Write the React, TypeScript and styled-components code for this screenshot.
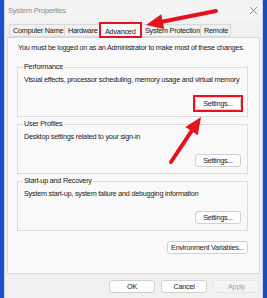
import React from "react";
import styled, { createGlobalStyle, css } from "styled-components";

const Global = createGlobalStyle`
  html, body { margin: 0; padding: 0; }
  body { width: 267px; height: 298px; overflow: hidden; font-family: "Liberation Sans", Arial, sans-serif; }
`;

const uiText = css`
  font-size: 7.3px;
  letter-spacing: -0.25px;
  color: #1a1a1a;
  white-space: nowrap;
`;

const Desktop = styled.div`
  position: relative;
  width: 267px;
  height: 298px;
  box-sizing: border-box;
  padding: 0 4px 0 4px;
  background: linear-gradient(90deg, #1b4fc9 0%, #3a86e8 40%, #1a4cc4 100%);
  display: flex;
  overflow: hidden;
`;

const Window = styled.div`
  flex: 1;
  min-width: 0;
  display: flex;
  flex-direction: column;
  background: #f0f0f0;
  border-left: 1px solid #c9d3e6;
  border-right: 1px solid #c9d3e6;
  height: 310px;
`;

const TitleBar = styled.div`
  height: 22px;
  display: flex;
  align-items: center;
  justify-content: space-between;
  padding: 0 4px 2px 3px;
  box-sizing: border-box;
  background: #f3f3f3;
`;

const Title = styled.span`
  ${uiText};
  font-size: 7.6px;
  color: #8c8c8c;
`;

const Body = styled.div`
  display: flex;
  flex-direction: column;
  padding: 0 2px 0 2px;
  min-width: 0;
`;

const Tabs = styled.div`
  display: flex;
  padding-left: 2px;
  height: 15px;
  align-items: flex-end;
`;

const Tab = styled.div<{ $active?: boolean; $w: number }>`
  ${uiText};
  box-sizing: border-box;
  width: ${(p) => p.$w}px;
  height: ${(p) => (p.$active ? 15 : 13)}px;
  margin-bottom: ${(p) => (p.$active ? -1 : 0)}px;
  border: 1px solid #d9d9d9;
  border-bottom: ${(p) => (p.$active ? "none" : "1px solid #d9d9d9")};
  border-left: ${(p) => (p.$active ? "1px solid #d9d9d9" : "none")};
  background: ${(p) => (p.$active ? "#f9f9f9" : "#f0f0f0")};
  padding-left: ${(p) => (p.$active ? 4 : 3)}px;
  display: flex;
  align-items: center;
  position: relative;
  z-index: ${(p) => (p.$active ? 1 : 0)};
  &:first-child { border-left: 1px solid #d9d9d9; }
`;

const Highlight = styled.div`
  position: absolute;
  left: -2px;
  right: -1px;
  top: -2px;
  bottom: 0px;
  border: 2px solid #e3141b;
  pointer-events: none;
`;

const Panel = styled.div`
  box-sizing: border-box;
  height: 237px;
  background: #f9f9f9;
  border: 1px solid #d9d9d9;
  padding: 4px 11px 0 9px;
  display: flex;
  flex-direction: column;
  min-width: 0;
  overflow: hidden;
`;

const Notice = styled.div`
  ${uiText};
  padding-left: 1px;
  height: 12px;
  line-height: 12px;
  margin-bottom: 8px;
`;

const Group = styled.fieldset`
  margin: 0 0 2px 0;
  padding: 0 6px 6px 5px;
  border: 1px solid #dcdcdc;
  display: flex;
  flex-direction: column;
  min-width: 0;
`;

const Legend = styled.legend`
  ${uiText};
  padding: 0 1px;
  line-height: 10px;
`;

const GroupText = styled.div`
  ${uiText};
  padding-left: 1px;
  line-height: 11px;
  margin-top: 2px;
  margin-bottom: 12px;
`;

const ButtonRow = styled.div`
  display: flex;
  justify-content: flex-end;
`;

const Button = styled.div<{ $w: number; $disabled?: boolean }>`
  ${uiText};
  position: relative;
  box-sizing: border-box;
  width: ${(p) => p.$w}px;
  height: 13px;
  border: 1px solid ${(p) => (p.$disabled ? "#e6e6e6" : "#d0d0d0")};
  border-radius: 3px;
  background: ${(p) => (p.$disabled ? "#f5f5f5" : "#fdfdfd")};
  color: ${(p) => (p.$disabled ? "#a3a3a3" : "#1a1a1a")};
  display: flex;
  align-items: center;
  justify-content: center;
`;

const ButtonBox = styled.div`
  position: absolute;
  left: -3px;
  right: -3px;
  top: -3px;
  bottom: -3px;
  border: 2px solid #e3141b;
  pointer-events: none;
`;

const EnvRow = styled.div`
  display: flex;
  justify-content: flex-end;
  margin-top: 8px;
`;

const Footer = styled.div`
  display: flex;
  justify-content: flex-end;
  gap: 6px;
  padding: 6px 0 0 0;
`;

const Overlay = styled.svg`
  position: absolute;
  left: 0;
  top: 0;
  pointer-events: none;
`;

function Arrow({ x1, y1, x2, y2 }: { x1: number; y1: number; x2: number; y2: number }) {
  const dx = x2 - x1;
  const dy = y2 - y1;
  const len = Math.hypot(dx, dy);
  const ux = dx / len;
  const uy = dy / len;
  const hl = 17;
  const hw = 7.5;
  const bx = x2 - ux * hl;
  const by = y2 - uy * hl;
  const px = -uy;
  const py = ux;
  return (
    <g>
      <line x1={x1} y1={y1} x2={bx + ux * 2} y2={by + uy * 2} stroke="#e3141b" strokeWidth={4} strokeLinecap="round" />
      <polygon
        points={`${x2},${y2} ${bx + px * hw},${by + py * hw} ${bx - px * hw},${by - py * hw}`}
        fill="#e3141b"
      />
    </g>
  );
}

function Close() {
  return (
    <svg width="9" height="9" viewBox="0 0 9 9">
      <path d="M1 1 L8 8 M8 1 L1 8" stroke="#8a8a8a" strokeWidth="1" />
    </svg>
  );
}

export default function App() {
  return (
    <>
      <Global />
      <Desktop>
        <Window>
          <TitleBar>
            <Title>System Properties</Title>
            <Close />
          </TitleBar>
          <Body>
            <Tabs>
              <Tab $w={56}>Computer Name</Tab>
              <Tab $w={35}>Hardware</Tab>
              <Tab $w={42} $active>
                Advanced
                <Highlight />
              </Tab>
              <Tab $w={59}>System Protection</Tab>
              <Tab $w={30}>Remote</Tab>
            </Tabs>
            <Panel>
              <Notice>You must be logged on as an Administrator to make most of these changes.</Notice>
              <Group>
                <Legend>Performance</Legend>
                <GroupText>Visual effects, processor scheduling, memory usage and virtual memory</GroupText>
                <ButtonRow>
                  <Button $w={46}>
                    Settings...
                    <ButtonBox />
                  </Button>
                </ButtonRow>
              </Group>
              <Group>
                <Legend>User Profiles</Legend>
                <GroupText>Desktop settings related to your sign-in</GroupText>
                <ButtonRow>
                  <Button $w={46}>Settings...</Button>
                </ButtonRow>
              </Group>
              <Group>
                <Legend>Start-up and Recovery</Legend>
                <GroupText>System start-up, system failure and debugging information</GroupText>
                <ButtonRow>
                  <Button $w={46}>Settings...</Button>
                </ButtonRow>
              </Group>
              <EnvRow>
                <Button $w={81}>Environment Variables...</Button>
              </EnvRow>
            </Panel>
            <Footer>
              <Button $w={46}>OK</Button>
              <Button $w={46}>Cancel</Button>
              <Button $w={47} $disabled>
                Apply
              </Button>
            </Footer>
          </Body>
        </Window>
        <Overlay width="267" height="298" viewBox="0 0 267 298">
          <Arrow x1={216} y1={11} x2={146} y2={25} />
          <Arrow x1={171} y1={162} x2={201} y2={117} />
        </Overlay>
      </Desktop>
    </>
  );
}
